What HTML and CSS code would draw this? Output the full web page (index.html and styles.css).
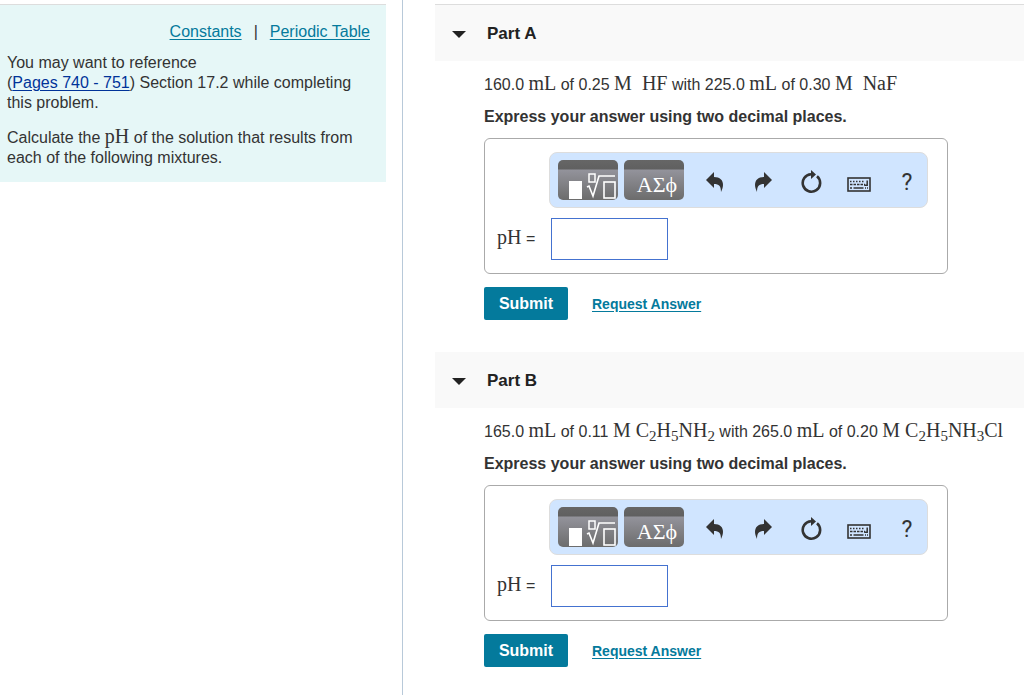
FILE: index.html
```html
<!DOCTYPE html>
<html lang="en">
<head>
  <meta charset="UTF-8">
  <meta name="viewport" content="width=device-width, initial-scale=1">
  <title>Item - Buffer pH</title>
  <link rel="stylesheet" href="styles.css">
</head>

<body>

  <!-- shared toolbar icons -->
  <svg class="sprite" aria-hidden="true">
    <symbol id="icon-template" viewBox="0 0 60 40">
      <rect x="11" y="21" width="13" height="18" fill="#fff"/>
      <rect x="31" y="14" width="6" height="8" fill="none" stroke="#fff" stroke-width="1.5"/>
      <path d="M29 27l2-1 4 10 6-20h16" fill="none" stroke="#fff" stroke-width="1.6"/>
      <rect x="46" y="22" width="11" height="16" fill="none" stroke="#fff" stroke-width="1.6"/>
    </symbol>
    <symbol id="icon-undo" viewBox="0 0 18 20">
      <path d="M0 8L8 0v5c6 0 9 3 9 8 0 2-1 5-2 7 0-6-2-8-7-8v4z" fill="#333"/>
    </symbol>
    <symbol id="icon-redo" viewBox="0 0 18 20">
      <path d="M18 8L10 0v5C4 5 1 8 1 13c0 2 1 5 2 7 0-6 2-8 7-8v4z" fill="#333"/>
    </symbol>
    <symbol id="icon-reset" viewBox="0 0 22 24">
      <path d="M17 6.300A8.700 8.700 0 1 1 11 4.300" fill="none" stroke="#333" stroke-width="2.600"/>
      <path d="M11 0l5 4.500-5 4.500z" fill="#333"/>
    </symbol>
    <symbol id="icon-keyboard" viewBox="0 0 24 15">
      <rect x="1" y="1" width="22" height="13" fill="none" stroke="#333" stroke-width="1.600"/>
      <path d="M3 4.500h15" stroke="#333" stroke-width="1.600" stroke-dasharray="1.500 1.500"/>
      <path d="M3 7.500h15" stroke="#333" stroke-width="1.600" stroke-dasharray="2.500 1"/>
      <path d="M20.200 3.500v4.800h-3" fill="none" stroke="#333" stroke-width="1.500"/>
      <path d="M3 11h2M6.500 11h10M18 11h1M20 11h1" stroke="#333" stroke-width="1.600"/>
    </symbol>
  </svg>

  <div class="page">

    <aside class="sidebar">
      <div class="intro">
        <nav class="resources">
          <a href="#constants">Constants</a>
          <span class="divider">|</span>
          <a href="#periodic-table">Periodic Table</a>
        </nav>
        <p>You may want to reference<br>
          (<a class="pages" href="#pages">Pages 740 - 751</a>) Section 17.2 while completing this problem.</p>
        <p>Calculate the <span class="math">pH</span> of the solution that results from each of the following mixtures.</p>
      </div>
    </aside>

    <main class="parts">

      <!-- Part A -->
      <section class="part">
        <h2 class="part-header part-header-first"><button type="button" class="toggle"><span class="caret"></span>Part A</button></h2>
        <div class="part-body">
          <p class="question">160.0 <span class="math">mL</span> of 0.25 <span class="math">M &nbsp;HF</span> with 225.0 <span class="math">mL</span> of 0.30 <span class="math">M &nbsp;NaF</span></p>
          <p class="instructions">Express your answer using two decimal places.</p>
          <form class="answer">
            <div class="answer-box">
              <div class="toolbar">
                <button type="button" class="palette" aria-label="Templates"><svg width="60" height="40"><use href="#icon-template"/></svg></button>
                <button type="button" class="palette palette-symbols">ΑΣϕ</button>
                <div class="tools">
                  <button type="button" class="tool" aria-label="Undo"><svg width="18" height="20"><use href="#icon-undo"/></svg></button>
                  <button type="button" class="tool" aria-label="Redo"><svg width="18" height="20"><use href="#icon-redo"/></svg></button>
                  <button type="button" class="tool" aria-label="Reset"><svg width="22" height="24"><use href="#icon-reset"/></svg></button>
                  <button type="button" class="tool tool-keyboard" aria-label="Keyboard shortcuts"><svg width="24" height="15"><use href="#icon-keyboard"/></svg></button>
                  <button type="button" class="tool">?</button>
                </div>
              </div>
              <div class="field">
                <label for="ph-a"><span class="math">pH</span> =</label>
                <input type="text" id="ph-a">
              </div>
            </div>
            <div class="actions">
              <button type="submit" class="submit">Submit</button>
              <a class="request" href="#request-a">Request Answer</a>
            </div>
          </form>
        </div>
      </section>

      <!-- Part B -->
      <section class="part">
        <h2 class="part-header"><button type="button" class="toggle"><span class="caret"></span>Part B</button></h2>
        <div class="part-body">
          <p class="question">165.0 <span class="math">mL</span> of 0.11 <span class="math">M C<sub>2</sub>H<sub>5</sub>NH<sub>2</sub></span> with 265.0 <span class="math">mL</span> of 0.20 <span class="math">M C<sub>2</sub>H<sub>5</sub>NH<sub>3</sub>Cl</span></p>
          <p class="instructions">Express your answer using two decimal places.</p>
          <form class="answer">
            <div class="answer-box">
              <div class="toolbar">
                <button type="button" class="palette" aria-label="Templates"><svg width="60" height="40"><use href="#icon-template"/></svg></button>
                <button type="button" class="palette palette-symbols">ΑΣϕ</button>
                <div class="tools">
                  <button type="button" class="tool" aria-label="Undo"><svg width="18" height="20"><use href="#icon-undo"/></svg></button>
                  <button type="button" class="tool" aria-label="Redo"><svg width="18" height="20"><use href="#icon-redo"/></svg></button>
                  <button type="button" class="tool" aria-label="Reset"><svg width="22" height="24"><use href="#icon-reset"/></svg></button>
                  <button type="button" class="tool tool-keyboard" aria-label="Keyboard shortcuts"><svg width="24" height="15"><use href="#icon-keyboard"/></svg></button>
                  <button type="button" class="tool">?</button>
                </div>
              </div>
              <div class="field">
                <label for="ph-b"><span class="math">pH</span> =</label>
                <input type="text" id="ph-b">
              </div>
            </div>
            <div class="actions">
              <button type="submit" class="submit">Submit</button>
              <a class="request" href="#request-b">Request Answer</a>
            </div>
          </form>
        </div>
      </section>

    </main>
  </div>

</body>
</html>
```

FILE: styles.css
```css
* {
  margin: 0;
  padding: 0;
  box-sizing: border-box;
}

body {
  font-family: "Liberation Sans", Arial, sans-serif;
  font-size: 16px;
  line-height: 20px;
  color: #333;
  background: #fff;
}

button {
  font-family: inherit;
  border: none;
  cursor: pointer;
}

a {
  color: #047a9c;
  text-underline-offset: 2px;
}

.sprite {
  display: none;
}

.math {
  font-family: "Liberation Serif", "Times New Roman", serif;
  font-size: 20px;
  line-height: 0;
}

.math sub {
  font-size: 15px;
  line-height: 0;
  vertical-align: -4px;
}

.page {
  display: flex;
  min-height: 100vh;
}

/* Left column */
.sidebar {
  flex: 0 0 403px;
  padding: 4px 16px 0 0;
  border-right: 1px solid #b8c9d9;
}

.intro {
  padding: 17px 16px 14px 7px;
  background: #e6f7f7;
  border-top: 1px solid #ddd;
}

.intro p {
  margin-bottom: 15px;
}

.intro p:last-child {
  margin-bottom: 0;
}

.resources {
  display: flex;
  justify-content: flex-end;
  gap: 12px;
  margin-bottom: 11px;
}

.intro .pages {
  color: #003399;
}

/* Parts */
.parts {
  flex: 1;
  min-width: 0;
  padding: 4px 0 0 32px;
}

.part {
  margin-bottom: 32px;
}

.part-header {
  background: #f9f9f9;
}

.part-header-first {
  border-top: 1px solid #ddd;
}

.toggle {
  display: flex;
  align-items: center;
  gap: 21px;
  width: 100%;
  height: 56px;
  padding: 2px 0 0 17px;
  font-size: 17px;
  font-weight: bold;
  color: #222;
  background: none;
}

.caret {
  border: 7px solid transparent;
  border-top-color: #222;
  border-bottom: none;
}

.part-body {
  padding: 14px 0 0 49px;
}

.question {
  margin-bottom: 12px;
  white-space: nowrap;
}

.instructions {
  margin-bottom: 11px;
  font-weight: bold;
}

.answer-box {
  max-width: 464px;
  padding: 13px 19px 13px 12px;
  border: 1px solid #aaa;
  border-radius: 6px;
}

.toolbar {
  display: flex;
  align-items: center;
  gap: 6px;
  height: 56px;
  margin: 0 0 10px 52px;
  padding: 0 8px;
  background: #d0e5ff;
  border: 1px solid #ddd;
  border-radius: 8px;
}

.palette {
  flex: none;
  width: 60px;
  height: 40px;
  border-radius: 5px;
  background: linear-gradient(#666 0, #606060 9px, #93939b 10px, #6c6c6c 100%);
}

.palette svg {
  display: block;
}

.palette-symbols {
  padding: 10px 0 0 6px;
  font-family: "Liberation Serif", "Times New Roman", serif;
  font-size: 22px;
  color: #fff;
}

.tools {
  display: flex;
  gap: 18px;
  margin-left: 10px;
}

.tool {
  display: flex;
  flex: none;
  align-items: center;
  justify-content: center;
  width: 30px;
  height: 32px;
  padding-top: 4px;
  font-family: Roboto, sans-serif;
  font-size: 23px;
  color: #333;
  background: none;
}

.tool-keyboard {
  padding-top: 9px;
}

.field {
  display: flex;
  align-items: center;
}

.field label {
  width: 54px;
}

.field input {
  width: 117px;
  height: 42px;
  padding: 0 8px;
  font-size: 16px;
  border: 1px solid #4472d0;
}

.actions {
  display: flex;
  align-items: center;
  gap: 24px;
  margin-top: 13px;
}

.submit {
  width: 84px;
  height: 33px;
  font-size: 16px;
  font-weight: bold;
  color: #fff;
  background: #047a9c;
  border-radius: 2px;
}

.request {
  font-size: 14px;
  font-weight: bold;
}
```
